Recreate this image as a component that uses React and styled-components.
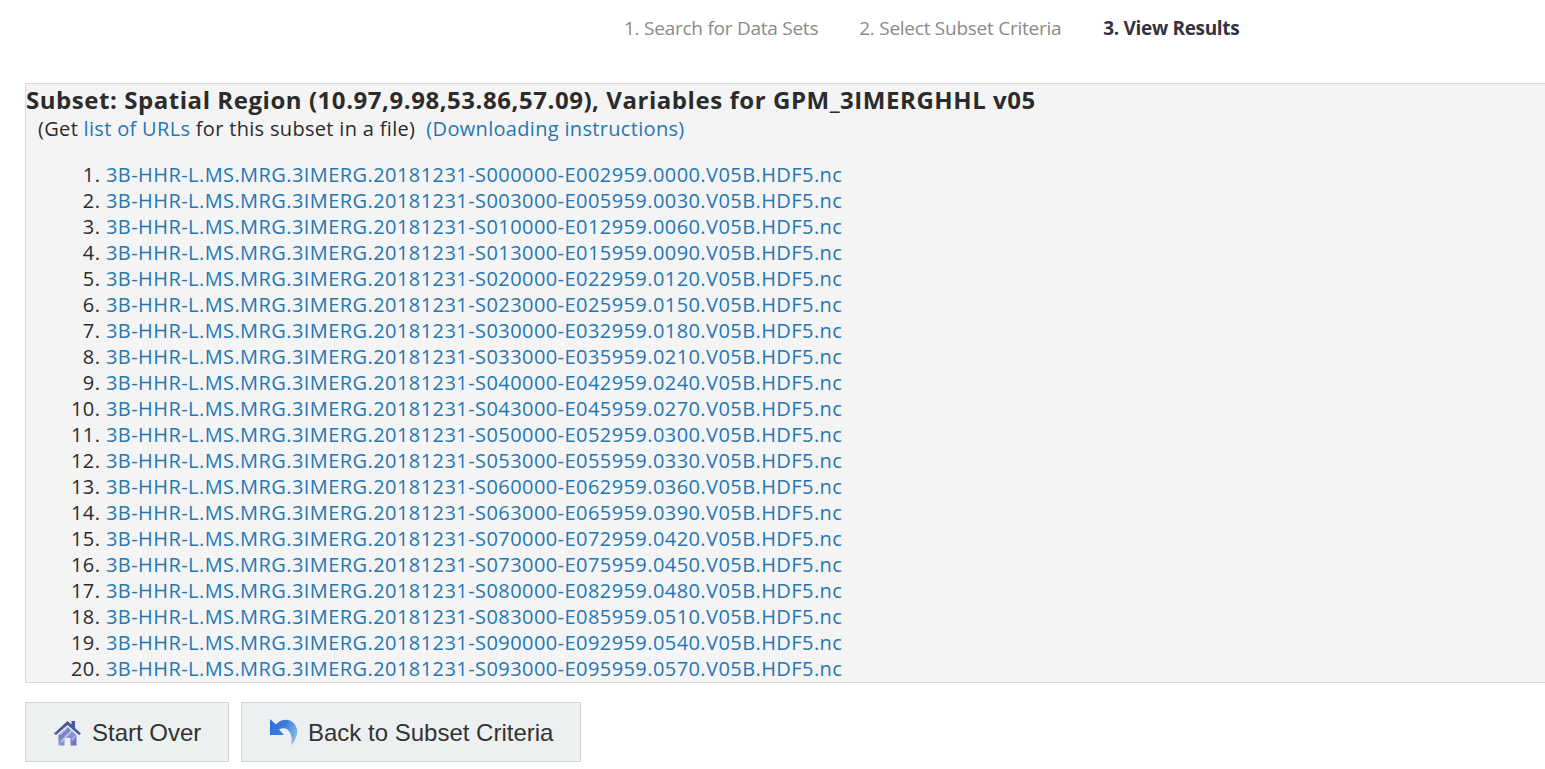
import React from 'react';
import styled, { createGlobalStyle } from 'styled-components';

const Global = createGlobalStyle`
  html, body { margin: 0; padding: 0; background: #fff; overflow: hidden; }
  body { font-family: "Open Sans", "Noto Sans", sans-serif; color: #2b2b2b; }
`;
const Page = styled.div`
  width: 1545px;
  height: 769px;
  overflow: hidden;
`;
const Steps = styled.nav`
  display: flex;
  height: 83px;
  box-sizing: border-box;
  padding: 16px 0 0 624px;
  gap: 41px;
  font-size: 19px;
  line-height: 24px;
`;
const Step = styled.span`
  color: ${p => (p.$active ? '#33333f' : '#8a8a8a')};
  font-weight: ${p => (p.$active ? 700 : 400)};
  letter-spacing: ${p => (p.$active ? '-0.33px' : '-0.25px')};
  margin-left: ${p => (p.$active ? '1px' : '0')};
  white-space: nowrap;
`;
const Panel = styled.section`
  margin-left: 25px;
  height: 600px;
  box-sizing: border-box;
  background: #f4f4f4;
  border: 1px solid #d9d9d9;
  border-right: 0;
  overflow: hidden;
`;
const Title = styled.h1`
  margin: 0;
  font-size: 24px;
  line-height: 32px;
  font-weight: 700;
  letter-spacing: 0.55px;
  color: #2b2b2b;
  white-space: nowrap;
`;
const Note = styled.p`
  margin: 0;
  padding-left: 12px;
  font-size: 20px;
  line-height: 26px;
  letter-spacing: 0.32px;
  white-space: pre;
`;
const Link = styled.a`
  color: #1f77b4;
  text-decoration: none;
`;
const Files = styled.ol`
  margin: 20px 0 0;
  padding-left: 80px;
  font-size: 20px;
  line-height: 26px;
  letter-spacing: 0.43px;
`;
const File = styled.li`
  height: 26px;
  white-space: nowrap;
`;
const Actions = styled.div`
  display: flex;
  gap: 12px;
  margin: 19px 0 0 25px;
`;
const Button = styled.button`
  display: flex;
  align-items: center;
  width: ${p => p.$width}px;
  height: 60px;
  box-sizing: border-box;
  padding: 2px 0 0 ${p => p.$left}px;
  gap: ${p => p.$gap}px;
  background: #ecf0f1;
  border: 1px solid #d0d5d6;
  color: #333;
  font-family: "Liberation Sans", Arial, sans-serif;
  font-size: 24px;
  white-space: nowrap;
`;
const Glyph = styled.svg`
  flex: none;
  margin-top: ${p => p.$lift}px;
`;

const Home = () => (
  <Glyph $lift={-1} width="27" height="26" viewBox="0 0 27 26">
    <defs>
      <linearGradient id="homeFill" x1="0" y1="0" x2="1" y2="1">
        <stop offset="0" stopColor="#3f4fa5" />
        <stop offset="0.5" stopColor="#8d9ad6" />
        <stop offset="1" stopColor="#5f6bb5" />
      </linearGradient>
    </defs>
    <path d="M0 13.5 L13.5 1 L17.5 4.5 V1 H21 V8 L27 13.5 L25 15 L13.5 5 L2 15 Z" fill="#4a56a6" />
    <path d="M4.5 15 L13.5 7 L22.5 15 V25.5 H16.5 V18 H10.5 V25.5 H4.5 Z" fill="url(#homeFill)" />
    <path d="M7 22 L18 10 M6 15 L13 8 M18 20 L22 15" stroke="#c3cbee" strokeWidth="1.2" fill="none" />
  </Glyph>
);
const Undo = () => (
  <Glyph $lift={-3} width="28" height="28" viewBox="0 0 28 28">
    <defs>
      <linearGradient id="undoFill" x1="0" y1="0" x2="1" y2="0.4">
        <stop offset="0" stopColor="#2f6fde" />
        <stop offset="0.55" stopColor="#3f7cd8" />
        <stop offset="1" stopColor="#7fb2e6" />
      </linearGradient>
    </defs>
    <path d="M0 1 L6 6.5 C12 -1 24 0 27 11 C28 17 25 23 21 27.5 C23 20 21 12 15 10.5 C13 10 11 10.5 9 11.5 L14 17 L0 17 Z" fill="url(#undoFill)" />
  </Glyph>
);

const codes = [
  ['000000','002959','0000'],['003000','005959','0030'],['010000','012959','0060'],['013000','015959','0090'],
  ['020000','022959','0120'],['023000','025959','0150'],['030000','032959','0180'],['033000','035959','0210'],
  ['040000','042959','0240'],['043000','045959','0270'],['050000','052959','0300'],['053000','055959','0330'],
  ['060000','062959','0360'],['063000','065959','0390'],['070000','072959','0420'],['073000','075959','0450'],
  ['080000','082959','0480'],['083000','085959','0510'],['090000','092959','0540'],['093000','095959','0570'],
];

export default function App() {
  return (
    <Page>
      <Global />
      <Steps>
        <Step>1. Search for Data Sets</Step>
        <Step>2. Select Subset Criteria</Step>
        <Step $active>3. View Results</Step>
      </Steps>
      <Panel>
        <Title>Subset: Spatial Region (10.97,9.98,53.86,57.09), Variables for GPM_3IMERGHHL v05</Title>
        <Note>(Get <Link href="#">list of URLs</Link> for this subset in a file)  <Link href="#">(Downloading instructions)</Link></Note>
        <Files>
          {codes.map(([s, e, n]) => (
            <File key={n}><Link href="#">{`3B-HHR-L.MS.MRG.3IMERG.20181231-S${s}-E${e}.${n}.V05B.HDF5.nc`}</Link></File>
          ))}
        </Files>
      </Panel>
      <Actions>
        <Button $width={204} $left={28} $gap={11}><Home />Start Over</Button>
        <Button $width={340} $left={28} $gap={10}><Undo />Back to Subset Criteria</Button>
      </Actions>
    </Page>
  );
}
